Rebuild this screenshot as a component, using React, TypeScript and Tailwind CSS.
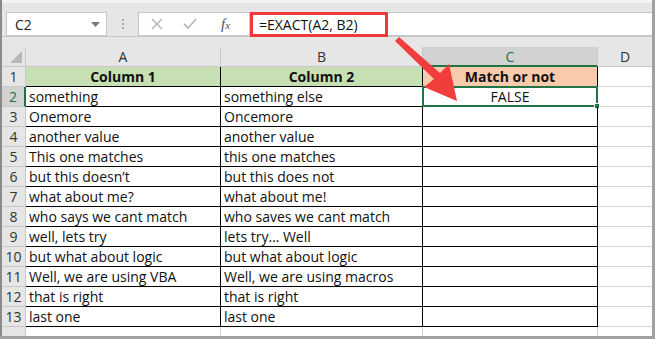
import React from 'react'

const rows: [string, string][] = [
  ['something', 'something else'],
  ['Onemore', 'Oncemore'],
  ['another value', 'another value'],
  ['This one matches', 'this one matches'],
  ['but this doesn’t', 'but this does not'],
  ['what about me?', 'what about me!'],
  ['who says we cant match', 'who saves we cant match'],
  ['well, lets try', 'lets try… Well'],
  ['but what about logic', 'but what about logic'],
  ['Well, we are using VBA', 'Well, we are using macros'],
  ['that is right', 'that is right'],
  ['last one', 'last one'],
]

const font = { fontFamily: '"Open Sans", "Noto Sans", sans-serif' }

export default function App() {
  return (
    <div className="w-[655px] h-[339px] bg-[#a0a0a0] relative" style={font}>
      <div className="w-[652px] h-[336px] bg-white overflow-hidden border-l-2 border-[#8a8a8a] flex flex-col">
        {/* FORMULA BAR */}
        <div className="bg-[#e6e6e6] pt-[9px] border-t-[3px] border-[#f3f3f3]">
          <div className="flex h-[25px] border-b border-[#c8c8c8]">
            <div className="ml-[4px] w-[101px] bg-white border border-[#c6c6c6] flex items-center justify-between pl-[8px] pr-[6px] text-[14px] text-[#222]">
              <span>C2</span>
              <svg width="9" height="5" viewBox="0 0 9 5">
                <path d="M0 0h9L4.5 5z" fill="#777" />
              </svg>
            </div>
            <div className="w-[31px] flex flex-col items-center justify-center gap-[2px]">
              <span className="w-[2px] h-[2px] bg-[#aaa]" />
              <span className="w-[2px] h-[2px] bg-[#aaa]" />
              <span className="w-[2px] h-[2px] bg-[#aaa]" />
            </div>
            <div className="w-[112px] bg-white border border-[#c6c6c6] flex items-center pl-[12px] gap-[20px]">
              <svg width="12" height="12" viewBox="0 0 12 12">
                <path d="M1 1l10 10M11 1L1 11" stroke="#b9b9b9" strokeWidth="1.6" />
              </svg>
              <svg width="14" height="12" viewBox="0 0 14 12">
                <path d="M1 6l4 4 8-9" stroke="#b9b9b9" strokeWidth="1.8" fill="none" />
              </svg>
              <span className="italic text-[15px] text-[#555] ml-[4px]" style={{ fontFamily: '"Liberation Serif", serif' }}>
                f<span className="text-[11px]">x</span>
              </span>
            </div>
            <div className="flex-1 bg-white border-y border-[#c6c6c6] flex items-center">
              <div className="w-[138px] h-[25px] -my-px border-[3px] border-[#f03a3a] flex items-center pl-[6px] text-[14px] text-[#111]">
                =EXACT(A2, B2)
              </div>
            </div>
          </div>
          <div className="h-[10px]" />
        </div>

        {/* GRID */}
        <div className="grid grid-cols-[24px_195px_202px_175px_54px] text-[14px] text-[#111]">
          <div className="h-[20px] bg-[#e6e6e6] border-r border-b border-[#c8c8c8] relative">
            <svg className="absolute right-[3px] bottom-[3px]" width="12" height="12" viewBox="0 0 12 12">
              <path d="M12 0v12H0z" fill="#b8b8b8" />
            </svg>
          </div>
          <div className="h-[20px] bg-[#e6e6e6] border-r border-b border-[#c8c8c8] flex items-center justify-center text-[#333]">A</div>
          <div className="h-[20px] bg-[#e6e6e6] border-r border-b border-[#c8c8c8] flex items-center justify-center text-[#333]">B</div>
          <div className="h-[20px] bg-[#d2d2d2] border-r border-b-2 border-r-[#c8c8c8] border-b-[#217346] flex items-center justify-center text-[#217346]">C</div>
          <div className="h-[20px] bg-[#e6e6e6] border-b border-[#c8c8c8] flex items-center justify-center text-[#333]">D</div>

          {/* header row 1 */}
          <div className="h-[20px] bg-[#e6e6e6] border-r border-b border-[#c8c8c8] flex items-center justify-center text-[#333]">1</div>
          <div className="h-[20px] bg-[#c6e0b4] border-r border-b border-black flex items-center justify-center font-bold">Column 1</div>
          <div className="h-[20px] bg-[#c6e0b4] border-r border-b border-black flex items-center justify-center font-bold">Column 2</div>
          <div className="h-[20px] bg-[#f8cbad] border-r border-b border-black flex items-center justify-center font-bold">Match or not</div>
          <div className="h-[20px] border-b border-[#d4d4d4]" />

          {rows.map(([a, b], i) => {
            const n = i + 2
            const sel = n === 2
            return (
              <React.Fragment key={n}>
                <div
                  className={
                    sel
                      ? 'h-[20px] bg-[#d2d2d2] border-r-2 border-b border-r-[#217346] border-b-[#c8c8c8] flex items-center justify-center text-[#217346]'
                      : 'h-[20px] bg-[#e6e6e6] border-r border-b border-[#c8c8c8] flex items-center justify-center text-[#333]'
                  }
                >
                  {n}
                </div>
                <div className="h-[20px] border-r border-b border-black flex items-center pl-[3px] whitespace-nowrap overflow-hidden">{a}</div>
                <div className="h-[20px] border-r border-b border-black flex items-center pl-[3px] whitespace-nowrap overflow-hidden">{b}</div>
                <div className="h-[20px] border-r border-b border-black relative">
                  {sel && (
                    <div className="absolute -left-px -top-px -right-px -bottom-px border-2 border-[#217346] flex items-center justify-center">
                      FALSE
                      <span className="absolute -right-[4px] -bottom-[4px] w-[6px] h-[6px] bg-[#217346] border border-white" />
                    </div>
                  )}
                </div>
                <div className="h-[20px] border-b border-[#d4d4d4]" />
              </React.Fragment>
            )
          })}

          {/* row 14 partial */}
          <div className="h-[20px] bg-[#e6e6e6] border-r border-[#c8c8c8]" />
          <div className="h-[20px] border-r border-[#d4d4d4]" />
          <div className="h-[20px] border-r border-[#d4d4d4]" />
          <div className="h-[20px] border-r border-[#d4d4d4]" />
          <div className="h-[20px]" />
        </div>
      </div>

      {/* RED ARROW */}
      <svg className="absolute left-0 top-0 pointer-events-none" width="655" height="339">
        <path d="M395 41 L399 37 L440 73 L449 64 L457 101 L424 87 L434 79 Z" fill="#f23d3d" />
      </svg>
    </div>
  )
}
